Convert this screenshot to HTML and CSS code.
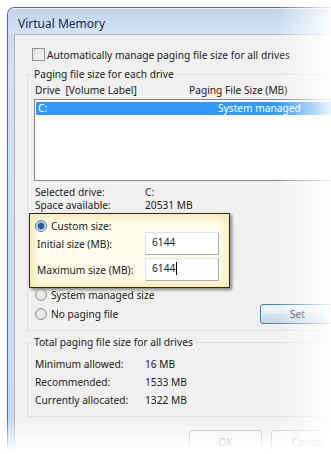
FILE: index.html
```html
<!DOCTYPE html>
<html>
<head>
	<title>Virtual Memory</title>
	<link rel="stylesheet" href="styles.css">
</head>
<body>
	<div class="window">
		<div class="titlebar">Virtual Memory</div>
		<div class="client">
			<div class="check-row"><span class="checkbox"></span>Automatically manage paging file size for all drives</div>

			<fieldset class="group group-drives">
				<legend>Paging file size for each drive</legend>
				<div class="list-head">
					<span class="col-drive">Drive&nbsp;&nbsp;[Volume Label]</span>
					<span>Paging File Size (MB)</span>
				</div>
				<div class="listbox">
					<div class="list-row selected">
						<span class="col-drive">C:</span>
						<span class="col-size">System managed</span>
					</div>
				</div>
				<div class="info">
					<div class="info-row"><span class="info-label">Selected drive:</span><span>C:</span></div>
					<div class="info-row"><span class="info-label">Space available:</span><span>20531 MB</span></div>
				</div>

				<div class="highlight">
					<div class="radio-row radio-custom"><span class="radio checked"></span>Custom size:</div>
					<div class="field-row">
						<span class="field-label">Initial size (MB):</span>
						<span class="textbox">6144</span>
					</div>
					<div class="field-row">
						<span class="field-label">Maximum size (MB):</span>
						<span class="textbox">6144<span class="caret"></span></span>
					</div>
				</div>

				<div class="radio-row radio-system"><span class="radio"></span>System managed size</div>
				<div class="radio-row radio-none">
					<span class="radio"></span><span class="radio-label">No paging file</span>
					<span class="button button-set">Set</span>
				</div>
			</fieldset>

			<fieldset class="group group-total">
				<legend>Total paging file size for all drives</legend>
				<div class="total-row"><span class="info-label">Minimum allowed:</span><span>16 MB</span></div>
				<div class="total-row"><span class="info-label">Recommended:</span><span>1533 MB</span></div>
				<div class="total-row"><span class="info-label">Currently allocated:</span><span>1322 MB</span></div>
			</fieldset>

			<div class="buttons">
				<span class="button">OK</span>
				<span class="button">Cancel</span>
			</div>
		</div>
	</div>
	<div class="fade"></div>
</body>
</html>
```

FILE: styles.css
```css
html, body {
	margin: 0;
	padding: 0;
	overflow: hidden;
	background-color: #FFFFFF;
}

body {
	font-family: "Noto Sans", "Open Sans", sans-serif;
	font-size: 10.2px;
	color: #1A1A1A;
	width: 331px;
	height: 454px;
}

.window {
	margin: 7px 0 0 7px;
	width: 324px;
	height: 447px;
	box-sizing: border-box;
	overflow: hidden;
	border: 1px solid #5E6B7C;
	border-right: none;
	border-bottom: none;
	border-radius: 7px 0 0 0;
	background: linear-gradient(to bottom, #C4D7EE, #D2E1F3 60px, #C6D9EF);
	padding-left: 6px;
}

.titlebar {
	height: 26px;
	box-sizing: border-box;
	margin-left: -6px;
	padding: 3px 0 0 10px;
	line-height: 24px;
	font-size: 12px;
	color: #1B2A44;
	background: linear-gradient(to bottom, #BDD3EC, #D6E4F5);
	border-top: 1px solid #EEF4FB;
	border-radius: 7px 0 0 0;
}

.client {
	height: 420px;
	overflow: hidden;
	background-color: #F0F0F0;
	border-left: 1px solid #A8B8CC;
	border-top: 1px solid #A8B8CC;
	padding-top: 12px;
	box-sizing: border-box;
}

.check-row {
	display: flex;
	align-items: center;
	padding-left: 17px;
	height: 15px;
}

.checkbox {
	width: 13px;
	height: 13px;
	box-sizing: border-box;
	border: 1px solid #8E8F8F;
	background: linear-gradient(135deg, #DCDCDC, #FAFAFA);
	margin-right: 2px;
}

.group {
	width: 340px;
	margin: 5px 0 0 12px;
	padding: 0;
	border: 1px solid #D5DFE5;
	min-width: 0;
}

.group legend {
	margin-left: 4px;
	padding: 0 2px;
	height: 14px;
	line-height: 14px;
}

.list-head {
	display: flex;
	margin-top: 2px;
	padding-left: 7px;
	height: 14px;
	line-height: 14px;
}

.col-drive {
	width: 154px;
}

.listbox {
	margin: 2px 0 0 6px;
	height: 82px;
	box-sizing: border-box;
	border: 1px solid #828790;
	background-color: #FFFFFF;
	padding: 2px 0 0 1px;
}

.list-row {
	display: flex;
	height: 13px;
	line-height: 13px;
	padding-left: 2px;
}

.list-row.selected {
	background-color: #3399FF;
	color: #FFFFFF;
}

.list-row .col-drive {
	width: 180px;
}

.info {
	margin-top: 5px;
	padding-left: 7px;
}

.info-row {
	display: flex;
	height: 13px;
	line-height: 13px;
}

.info-label {
	width: 110px;
}

.highlight {
	margin: 1px 0 0 1px;
	width: 201px;
	height: 75px;
	box-sizing: border-box;
	border: 1px solid #2E2A1E;
	background-color: #FFFCEB;
	box-shadow: inset 0 0 9px 3px #F7E6A4, 2px 2px 3px rgba(0, 0, 0, 0.45);
}

.radio-row {
	display: flex;
	align-items: center;
	height: 14px;
	padding-left: 7px;
}

.radio-custom {
	margin-top: 6px;
	height: 12px;
	padding-left: 5px;
}

.radio {
	width: 12px;
	height: 12px;
	box-sizing: border-box;
	border: 1px solid #8E8F8F;
	border-radius: 50%;
	background: radial-gradient(circle, #F4F4F4, #D7D7D7);
	margin-right: 4px;
}

.radio.checked {
	background: radial-gradient(circle, #2A64A4 0, #1F4F8A 2.5px, #8CB4DE 3.5px, #E9F1FA 5px);
	border-color: #5C7A9C;
}

.field-row {
	display: flex;
	align-items: center;
	height: 23px;
	padding-left: 7px;
}

.field-row + .field-row {
	margin-top: 3px;
}

.field-label {
	width: 108px;
}

.textbox {
	display: flex;
	align-items: center;
	width: 74px;
	height: 23px;
	box-sizing: border-box;
	border: 1px solid #ABADB3;
	border-top-color: #E2E3EA;
	border-left-color: #E2E3EA;
	background-color: #FFFFFF;
	padding: 0 0 3px 6px;
}

.caret {
	display: inline-block;
	width: 1px;
	height: 13px;
	background-color: #000000;
	margin-left: 1px;
}

.radio-none {
	height: 20px;
	margin-top: 2px;
	margin-bottom: 6px;
}

.radio-label {
	width: 209px;
}

.button {
	display: inline-flex;
	justify-content: center;
	align-items: center;
	flex-shrink: 0;
	width: 73px;
	height: 21px;
	box-sizing: border-box;
	border: 1px solid #707070;
	border-radius: 3px;
}

.button-set {
	width: 75px;
	height: 20px;
	border-color: #3C7FB1;
	background: linear-gradient(to bottom, #EEF5FB 0%, #E2EDF6 50%, #D2E2EF 51%, #C4D8E8 100%);
}

.group-total {
	margin-top: 4px;
	padding-bottom: 7px;
}

.total-row {
	display: flex;
	height: 18px;
	line-height: 18px;
	padding-left: 7px;
}

.group-total legend + .total-row {
	margin-top: 6px;
}

.buttons {
	display: flex;
	gap: 9px;
	margin: 13px 0 0 174px;
}

.buttons .button {
	height: 23px;
	border-color: #ADB2B5;
	color: #838383;
	background: #F4F4F4;
}

.fade {
	position: fixed;
	left: 0;
	top: 0;
	width: 331px;
	height: 454px;
	pointer-events: none;
	background:
		linear-gradient(to right, rgba(255, 255, 255, 0) 275px, rgba(255, 255, 255, 0.9) 331px),
		linear-gradient(to bottom, rgba(255, 255, 255, 0) 418px, rgba(255, 255, 255, 1) 452px);
}
```
